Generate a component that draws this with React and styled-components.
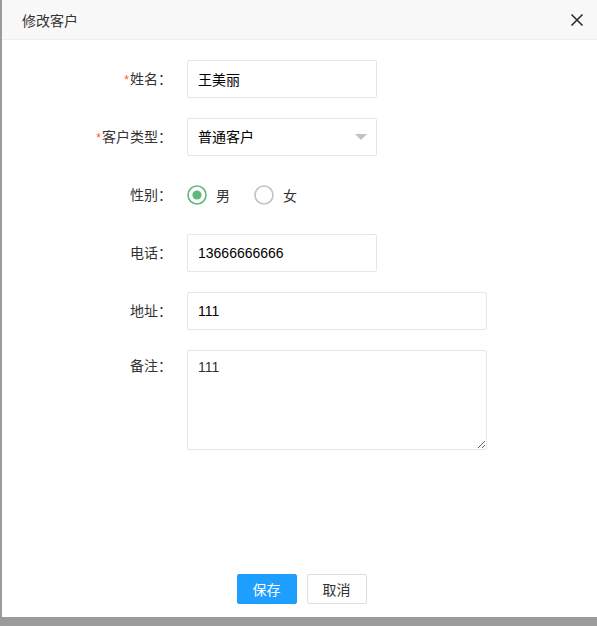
import React, { useState } from 'react'
import styled, { createGlobalStyle } from 'styled-components'

const GlobalStyle = createGlobalStyle`
  html, body {
    margin: 0;
    padding: 0;
    background: #9b9b9b;
  }
  body {
    font-family: "Liberation Sans", "Noto Sans CJK SC", sans-serif;
    font-size: 14px;
    color: #333;
  }
`

const Layer = styled.div`
  margin-left: 2px;
  width: 595px;
  height: 617px;
  background: #fff;
  display: flex;
  flex-direction: column;
`

const Header = styled.div`
  box-sizing: border-box;
  flex: 0 0 40px;
  height: 40px;
  border-bottom: 1px solid #eee;
  background: #f8f8f8;
  display: flex;
  align-items: center;
  justify-content: space-between;
  padding: 0 13px 0 20px;
  font-size: 14px;
  color: #333;
`

const CloseBtn = styled.button`
  border: none;
  background: none;
  padding: 0;
  width: 14px;
  height: 14px;
  display: flex;
  cursor: pointer;
`

const Form = styled.form`
  flex: 1;
  margin: 0;
  padding-top: 20px;
  display: flex;
  flex-direction: column;
  gap: 20px;
`

const Row = styled.div`
  display: flex;
  align-items: ${p => (p.$top ? 'flex-start' : 'center')};
  height: ${p => (p.$top ? 'auto' : '38px')};
`

const Label = styled.label`
  flex: 0 0 170px;
  padding-right: 15px;
  text-align: right;
  color: #333;
  height: 38px;
  line-height: 38px;
  overflow: visible;
  ${p => p.$top && 'height: 20px; line-height: 20px; padding-top: 6px;'}
`

const Star = styled.span`
  color: #ff5722;
  font-size: 12px;
  margin-right: 1px;
`

const Input = styled.input`
  box-sizing: border-box;
  width: ${p => p.$w || 190}px;
  height: 38px;
  border: 1px solid #e6e6e6;
  border-radius: 2px;
  padding: 0 10px;
  font: inherit;
  color: #000;
  background: #fff;
  outline: none;
`

const SelectBox = styled.div`
  position: relative;
  box-sizing: border-box;
  width: 190px;
  height: 38px;
  border: 1px solid #e6e6e6;
  border-radius: 2px;
  padding: 0 10px;
  line-height: 36px;
  color: #000;

  &::after {
    content: '';
    position: absolute;
    right: 9px;
    top: 15px;
    border-width: 6px;
    border-style: solid dashed dashed;
    border-color: #c2c2c2 transparent transparent;
  }
`

const TextArea = styled.textarea`
  box-sizing: border-box;
  width: 300px;
  height: 100px;
  border: 1px solid #e6e6e6;
  border-radius: 2px;
  padding: 6px 10px;
  font: inherit;
  line-height: 20px;
  color: #333;
  resize: both;
  outline: none;
  display: block;
`

const Radios = styled.div`
  display: flex;
  align-items: center;
  gap: 24px;
`

const Radio = styled.label`
  display: flex;
  align-items: center;
  gap: 9px;
  color: #333;
  cursor: pointer;
`

const Footer = styled.div`
  display: flex;
  justify-content: center;
  gap: 10px;
  padding: 0 0 13px 4px;
`

const Btn = styled.button`
  box-sizing: border-box;
  height: 30px;
  width: 60px;
  border-radius: 2px;
  font: inherit;
  font-size: 14px;
  cursor: pointer;
  border: 1px solid ${p => (p.$primary ? '#1e9fff' : '#dedede')};
  background: ${p => (p.$primary ? '#1e9fff' : '#fff')};
  color: ${p => (p.$primary ? '#fff' : '#333')};
`

const RadioIcon = ({ on }) => (
  <svg width="20" height="20" viewBox="0 0 20 20">
    <circle cx="10" cy="10" r="9" fill="#fff" stroke={on ? '#5fb878' : '#c2c2c2'} strokeWidth="1.6" />
    {on && <circle cx="10" cy="10" r="4.6" fill="#5fb878" />}
  </svg>
)

export default function App() {
  const [sex, setSex] = useState('男')

  return (
    <>
      <GlobalStyle />
      <Layer>
        <Header>
          <span>修改客户</span>
          <CloseBtn aria-label="关闭">
            <svg width="14" height="14" viewBox="0 0 14 14">
              <path d="M1.5 1.5 L12.5 12.5 M12.5 1.5 L1.5 12.5" stroke="#2e2d3c" strokeWidth="1.6" />
            </svg>
          </CloseBtn>
        </Header>

        <Form>
          <Row>
            <Label><Star>*</Star>姓名：</Label>
            <Input defaultValue="王美丽" />
          </Row>
          <Row>
            <Label><Star>*</Star>客户类型：</Label>
            <SelectBox>普通客户</SelectBox>
          </Row>
          <Row>
            <Label>性别：</Label>
            <Radios>
              {['男', '女'].map(s => (
                <Radio key={s} onClick={() => setSex(s)}>
                  <RadioIcon on={sex === s} />
                  {s}
                </Radio>
              ))}
            </Radios>
          </Row>
          <Row>
            <Label>电话：</Label>
            <Input defaultValue="13666666666" />
          </Row>
          <Row>
            <Label>地址：</Label>
            <Input $w={300} defaultValue="111" />
          </Row>
          <Row $top>
            <Label $top>备注：</Label>
            <TextArea defaultValue="111" />
          </Row>
        </Form>

        <Footer>
          <Btn $primary>保存</Btn>
          <Btn>取消</Btn>
        </Footer>
      </Layer>
    </>
  )
}
